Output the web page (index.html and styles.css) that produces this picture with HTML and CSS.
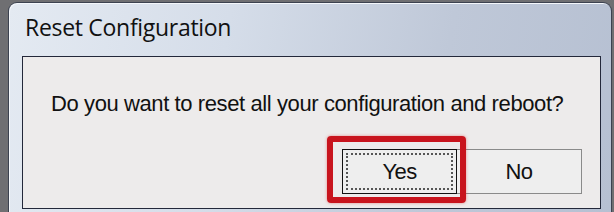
FILE: index.html
```html
<!DOCTYPE html>
<html lang="en">
<head>
<meta charset="UTF-8" />
<title>Reset Configuration</title>
<link rel="stylesheet" href="styles.css">
</head>
<body>

  <div class="window">
    <div class="titlebar">Reset Configuration</div>
    <div class="panel">
      <div class="message">Do you want to reset all your configuration and reboot?</div>
      <div class="buttons">
        <button class="btn btn-yes"><span class="focus">Yes</span><span class="highlight"></span></button>
        <button class="btn btn-no">No</button>
      </div>
    </div>
  </div>

</body>
</html>
```

FILE: styles.css
```css
html, body {
  overflow: hidden;
}

body {
  margin: 0;
  background: #6f6f72;
  height: 212px;
}

.window {
  margin: 2px 2px 0 8px;
  height: 210px;
  box-sizing: border-box;
  border-radius: 9px 9px 0 0;
  border: 1px solid #3c4250;
  border-bottom: none;
  background: linear-gradient(100deg, #e4eaf2 0%, #d5dde9 35%, #bfc8d8 70%, #b6c0d2 100%);
  padding: 0 10px 0 13px;
  box-shadow: inset 1px 1px 0 #f4f7fb;
}

/* Barra de título */
.titlebar {
  height: 53px;
  font-family: "Open Sans", sans-serif;
  font-size: 23px;
  line-height: 28px;
  padding: 10px 0 0 3px;
  box-sizing: border-box;
  color: #111;
  letter-spacing: -0.3px;
}

.panel {
  background: #edebeb;
  border: 1px solid #23283a;
  height: 153px;
  box-sizing: border-box;
  font-family: "Liberation Sans", Arial, sans-serif;
  color: #111;
}

.message {
  font-size: 22px;
  padding: 34px 0 0 28px;
  line-height: 26px;
  letter-spacing: -0.4px;
}

.buttons {
  display: flex;
  justify-content: flex-end;
  padding: 32px 18px 0 0;
}

.btn {
  height: 45px;
  font-family: "Liberation Sans", Arial, sans-serif;
  font-size: 22px;
  color: #111;
  background: #eeeeee;
  margin: 0;
  padding: 0;
  letter-spacing: -0.6px;
}

.btn-yes {
  width: 115px;
  border: 1px solid #111;
  position: relative;
  padding: 3px;
}

.focus {
  display: flex;
  height: 100%;
  align-items: center;
  justify-content: center;
  border: 2px dotted #555;
  box-sizing: border-box;
}

.btn-no {
  width: 125px;
  border: 1px solid #8a8a8a;
  border-left: none;
}

/* Recuadro rojo encima del botón */
.highlight {
  position: absolute;
  left: -16px;
  top: -14px;
  right: -10px;
  bottom: -10px;
  border: 6px solid #c8141d;
  border-radius: 4px;
  box-shadow: 0 0 3px rgba(220, 40, 40, 0.5);
}
```
